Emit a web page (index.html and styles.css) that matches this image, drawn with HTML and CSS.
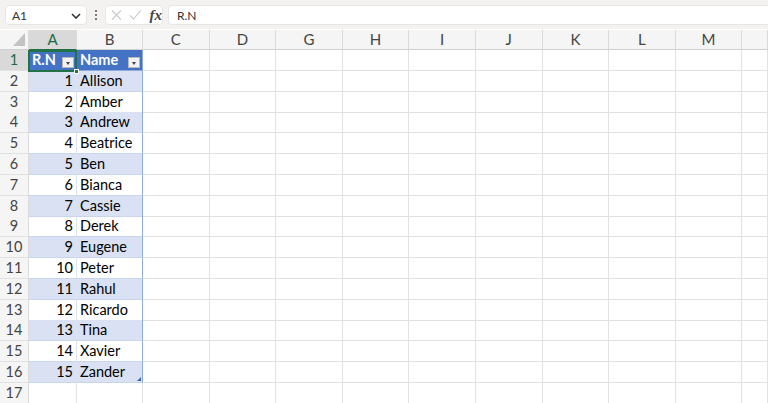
FILE: index.html
```html
<!DOCTYPE html>
<html>
<head>
<meta charset="utf-8">
<link rel="stylesheet" href="styles.css">
</head>
<body>
<div class="formula-bar">
  <div class="namebox">
    <span>A1</span>
    <svg class="chev" width="10" height="6" viewBox="0 0 10 6"><path d="M1 1 L5 5 L9 1" fill="none" stroke="#333" stroke-width="1.6"/></svg>
  </div>
  <div class="dots"><i></i><i></i><i></i></div>
  <div class="fxbox">
    <svg width="12" height="12" viewBox="0 0 12 12"><path d="M1 1 L11 11 M11 1 L1 11" stroke="#c4c4c4" stroke-width="1.2"/></svg>
    <svg width="14" height="12" viewBox="0 0 14 12"><path d="M1 6.5 L5 10.5 L13 1" fill="none" stroke="#c4c4c4" stroke-width="1.2"/></svg>
    <span class="fx">fx</span>
  </div>
  <div class="formula">R.N</div>
</div>

<div class="sheet">
  <div class="row hdr">
    <div class="corner"><span class="tri"></span></div>
    <div class="ch sel">A</div><div class="ch">B</div><div class="ch">C</div><div class="ch">D</div><div class="ch">G</div><div class="ch">H</div><div class="ch">I</div><div class="ch">J</div><div class="ch">K</div><div class="ch">L</div><div class="ch">M</div><div class="ch"></div>
  </div>
  <div class="row">
    <div class="rh sel">1</div>
    <div class="c th">R.N<span class="filter"></span></div><div class="c th last">Name<span class="filter"></span></div>
    <div class="c"></div><div class="c"></div><div class="c"></div><div class="c"></div><div class="c"></div><div class="c"></div><div class="c"></div><div class="c"></div><div class="c"></div><div class="c"></div>
  </div>
  <div class="row">
    <div class="rh">2</div>
    <div class="c t band num">1</div><div class="c t band last">Allison</div>
    <div class="c"></div><div class="c"></div><div class="c"></div><div class="c"></div><div class="c"></div><div class="c"></div><div class="c"></div><div class="c"></div><div class="c"></div><div class="c"></div>
  </div>
  <div class="row">
    <div class="rh">3</div>
    <div class="c t num">2</div><div class="c t last">Amber</div>
    <div class="c"></div><div class="c"></div><div class="c"></div><div class="c"></div><div class="c"></div><div class="c"></div><div class="c"></div><div class="c"></div><div class="c"></div><div class="c"></div>
  </div>
  <div class="row">
    <div class="rh">4</div>
    <div class="c t band num">3</div><div class="c t band last">Andrew</div>
    <div class="c"></div><div class="c"></div><div class="c"></div><div class="c"></div><div class="c"></div><div class="c"></div><div class="c"></div><div class="c"></div><div class="c"></div><div class="c"></div>
  </div>
  <div class="row">
    <div class="rh">5</div>
    <div class="c t num">4</div><div class="c t last">Beatrice</div>
    <div class="c"></div><div class="c"></div><div class="c"></div><div class="c"></div><div class="c"></div><div class="c"></div><div class="c"></div><div class="c"></div><div class="c"></div><div class="c"></div>
  </div>
  <div class="row">
    <div class="rh">6</div>
    <div class="c t band num">5</div><div class="c t band last">Ben</div>
    <div class="c"></div><div class="c"></div><div class="c"></div><div class="c"></div><div class="c"></div><div class="c"></div><div class="c"></div><div class="c"></div><div class="c"></div><div class="c"></div>
  </div>
  <div class="row">
    <div class="rh">7</div>
    <div class="c t num">6</div><div class="c t last">Bianca</div>
    <div class="c"></div><div class="c"></div><div class="c"></div><div class="c"></div><div class="c"></div><div class="c"></div><div class="c"></div><div class="c"></div><div class="c"></div><div class="c"></div>
  </div>
  <div class="row">
    <div class="rh">8</div>
    <div class="c t band num">7</div><div class="c t band last">Cassie</div>
    <div class="c"></div><div class="c"></div><div class="c"></div><div class="c"></div><div class="c"></div><div class="c"></div><div class="c"></div><div class="c"></div><div class="c"></div><div class="c"></div>
  </div>
  <div class="row">
    <div class="rh">9</div>
    <div class="c t num">8</div><div class="c t last">Derek</div>
    <div class="c"></div><div class="c"></div><div class="c"></div><div class="c"></div><div class="c"></div><div class="c"></div><div class="c"></div><div class="c"></div><div class="c"></div><div class="c"></div>
  </div>
  <div class="row">
    <div class="rh">10</div>
    <div class="c t band num">9</div><div class="c t band last">Eugene</div>
    <div class="c"></div><div class="c"></div><div class="c"></div><div class="c"></div><div class="c"></div><div class="c"></div><div class="c"></div><div class="c"></div><div class="c"></div><div class="c"></div>
  </div>
  <div class="row">
    <div class="rh">11</div>
    <div class="c t num">10</div><div class="c t last">Peter</div>
    <div class="c"></div><div class="c"></div><div class="c"></div><div class="c"></div><div class="c"></div><div class="c"></div><div class="c"></div><div class="c"></div><div class="c"></div><div class="c"></div>
  </div>
  <div class="row">
    <div class="rh">12</div>
    <div class="c t band num">11</div><div class="c t band last">Rahul</div>
    <div class="c"></div><div class="c"></div><div class="c"></div><div class="c"></div><div class="c"></div><div class="c"></div><div class="c"></div><div class="c"></div><div class="c"></div><div class="c"></div>
  </div>
  <div class="row">
    <div class="rh">13</div>
    <div class="c t num">12</div><div class="c t last">Ricardo</div>
    <div class="c"></div><div class="c"></div><div class="c"></div><div class="c"></div><div class="c"></div><div class="c"></div><div class="c"></div><div class="c"></div><div class="c"></div><div class="c"></div>
  </div>
  <div class="row">
    <div class="rh">14</div>
    <div class="c t band num">13</div><div class="c t band last">Tina</div>
    <div class="c"></div><div class="c"></div><div class="c"></div><div class="c"></div><div class="c"></div><div class="c"></div><div class="c"></div><div class="c"></div><div class="c"></div><div class="c"></div>
  </div>
  <div class="row">
    <div class="rh">15</div>
    <div class="c t num">14</div><div class="c t last">Xavier</div>
    <div class="c"></div><div class="c"></div><div class="c"></div><div class="c"></div><div class="c"></div><div class="c"></div><div class="c"></div><div class="c"></div><div class="c"></div><div class="c"></div>
  </div>
  <div class="row">
    <div class="rh">16</div>
    <div class="c t band num">15</div><div class="c t band last end">Zander<span class="resize"></span></div>
    <div class="c"></div><div class="c"></div><div class="c"></div><div class="c"></div><div class="c"></div><div class="c"></div><div class="c"></div><div class="c"></div><div class="c"></div><div class="c"></div>
  </div>
  <div class="row">
    <div class="rh">17</div>
    <div class="c"></div><div class="c"></div>
    <div class="c"></div><div class="c"></div><div class="c"></div><div class="c"></div><div class="c"></div><div class="c"></div><div class="c"></div><div class="c"></div><div class="c"></div><div class="c"></div>
  </div>
  <div class="selection"><span class="handle"></span></div>
</div>
</body>
</html>
```

FILE: styles.css
```css
* { box-sizing: border-box; }

html, body {
  margin: 0;
  padding: 0;
  width: 768px;
  height: 403px;
  overflow: hidden;
  background: #ffffff;
  font-family: Lato, "Open Sans", sans-serif;
}

/* ---------- formula bar ---------- */
.formula-bar {
  height: 29px;
  background: #f3f2f1;
  display: flex;
  align-items: flex-start;
  padding: 5px 0 0 5px;
}

.namebox {
  width: 82px;
  height: 20px;
  background: #fff;
  border: 1px solid #e6e6e6;
  border-radius: 4px;
  display: flex;
  align-items: center;
  justify-content: space-between;
  padding: 0 5px 0 6px;
  font-size: 12px;
  color: #333;
}
.namebox .chev { margin-top: 1px; }

.dots {
  width: 18px;
  height: 20px;
  display: flex;
  flex-direction: column;
  align-items: center;
  justify-content: center;
  gap: 2px;
}
.dots i {
  display: block;
  width: 2px;
  height: 2px;
  background: #555;
  border-radius: 1px;
}

.fxbox {
  width: 58px;
  height: 20px;
  background: #fff;
  border: 1px solid #e6e6e6;
  border-radius: 4px;
  display: flex;
  align-items: center;
  gap: 7px;
  padding: 0 0 0 5px;
}
.fx {
  font-family: "Liberation Serif", serif;
  font-style: italic;
  font-weight: 700;
  font-size: 15px;
  color: #444;
  line-height: 1;
  margin-left: 1px;
}

.formula {
  flex: 1;
  height: 20px;
  margin-left: 5px;
  background: #fff;
  border: 1px solid #e6e6e6;
  border-right: none;
  border-radius: 4px 0 0 4px;
  font-size: 12px;
  color: #333;
  display: flex;
  align-items: center;
  padding-left: 8px;
}

/* ---------- sheet ---------- */
.sheet {
  position: relative;
}

.row {
  display: grid;
  grid-template-columns: 29px 48px 66px repeat(9, 66.6px) 1fr;
  height: 20.8px;
  font-size: 14.5px;
  line-height: 20px;
  color: #000;
}
.row.hdr {
  height: 20px;
  margin-top: 1px;
}

.corner, .ch, .rh {
  background: #f5f5f5;
  color: #444;
  border-right: 1px solid #dadada;
  border-bottom: 1px solid #d0d0d0;
  text-align: center;
}
.corner {
  position: relative;
}
.tri {
  position: absolute;
  right: 3px;
  bottom: 3px;
  width: 0;
  height: 0;
  border-left: 12px solid transparent;
  border-bottom: 13px solid #c3c3c3;
}
.ch {
  line-height: 19px;
  font-size: 15px;
}
.ch.sel {
  background: #d9d9d9;
  color: #1e6b41;
  border-bottom: 1px solid #217346;
}
.rh { border-bottom-color: #e1e1e1; }
.rh.sel {
  background: #d9d9d9;
  color: #1e6b41;
  border-right: 1px solid #217346;
}

.c {
  border-right: 1px solid #e1e1e1;
  border-bottom: 1px solid #e1e1e1;
  white-space: nowrap;
  overflow: visible;
}

.c.t {
  border-bottom-color: #c9d5ec;
  border-right-color: #dbe3f2;
  padding: 0 3px;
}
.c.band { background: #d9e1f2; }
.c.num { text-align: right; }
.c.last { border-right-color: #8ea9db; }

.c.th {
  background: #4472c4;
  color: #fff;
  font-weight: 700;
  display: flex;
  justify-content: space-between;
  padding: 0 2px 0 3px;
  border-right-color: #4472c4;
  border-bottom-color: #8ea9db;
}
.c.th.last { border-right-color: #8ea9db; }

.filter {
  align-self: flex-end;
  margin-bottom: 2px;
  width: 12px;
  height: 11px;
  background: #f2f2f2;
  border: 1px solid #b8b8b8;
  position: relative;
}
.filter::after {
  content: "";
  position: absolute;
  left: 3px;
  top: 4px;
  border-left: 2.5px solid transparent;
  border-right: 2.5px solid transparent;
  border-top: 3px solid #444;
}

.c.end { position: relative; }
.resize {
  position: absolute;
  right: 1px;
  bottom: 1px;
  width: 0;
  height: 0;
  border-left: 4px solid transparent;
  border-bottom: 4px solid #3a64b4;
}

.selection {
  position: absolute;
  left: 28px;
  top: 20px;
  width: 49px;
  height: 22px;
  border: 2px solid #217346;
  pointer-events: none;
}
.handle {
  position: absolute;
  right: -4px;
  bottom: -4px;
  width: 5px;
  height: 5px;
  background: #217346;
  border: 1px solid #fff;
}
```
